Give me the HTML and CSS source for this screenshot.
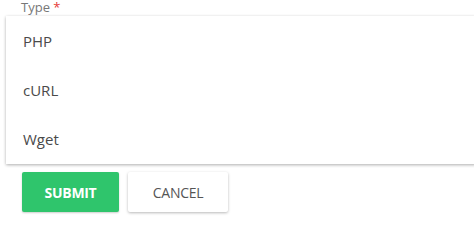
FILE: index.html
```html
<!DOCTYPE html>
<html>
<head>
<meta charset="utf-8">
<link rel="stylesheet" href="styles.css">
</head>
<body>
<div class="form">
  <div class="label">Type <span class="req">*</span></div>
  <ul class="menu">
    <li class="item">PHP</li>
    <li class="item">cURL</li>
    <li class="item">Wget</li>
  </ul>
  <div class="actions">
    <button class="btn btn-submit">SUBMIT</button>
    <button class="btn btn-cancel">CANCEL</button>
  </div>
</div>
</body>
</html>
```
FILE: styles.css
```css
html, body {
  margin: 0;
  padding: 0;
  background: #fff;
  overflow: hidden;
}
.form {
  font-family: "Open Sans", "Noto Sans", sans-serif;
  width: 474px;
  height: 221px;
}
.label {
  margin: 0 0 0 21px;
  height: 16px;
  line-height: 14px;
  font-size: 13px;
  color: #777;
}
.req {
  color: #e53935;
}
.menu {
  list-style: none;
  margin: 0 0 0 6px;
  padding: 1px 0 0;
  width: 470px;
  height: 147px;
  background: #fff;
  box-shadow: 0 1px 3px rgba(0, 0, 0, 0.32);
}
.item {
  height: 49px;
  line-height: 49px;
  padding-left: 17px;
  font-size: 15px;
  color: #4a4a4a;
}
.actions {
  display: flex;
  gap: 9px;
  margin: 8px 0 0 22px;
}
.btn {
  height: 40px;
  border: none;
  border-radius: 2px;
  font-family: "Open Sans", "Noto Sans", sans-serif;
  font-size: 14px;
  padding: 0;
  cursor: pointer;
}
.btn-submit {
  width: 97px;
  background: #2fc56c;
  color: #fff;
  font-weight: 700;
  letter-spacing: -0.3px;
  box-shadow: 0 1px 2px rgba(0, 0, 0, 0.2);
}
.btn-cancel {
  width: 100px;
  background: #fff;
  color: #555;
  letter-spacing: -0.3px;
  box-shadow: 0 1px 3px rgba(0, 0, 0, 0.28);
}
```
